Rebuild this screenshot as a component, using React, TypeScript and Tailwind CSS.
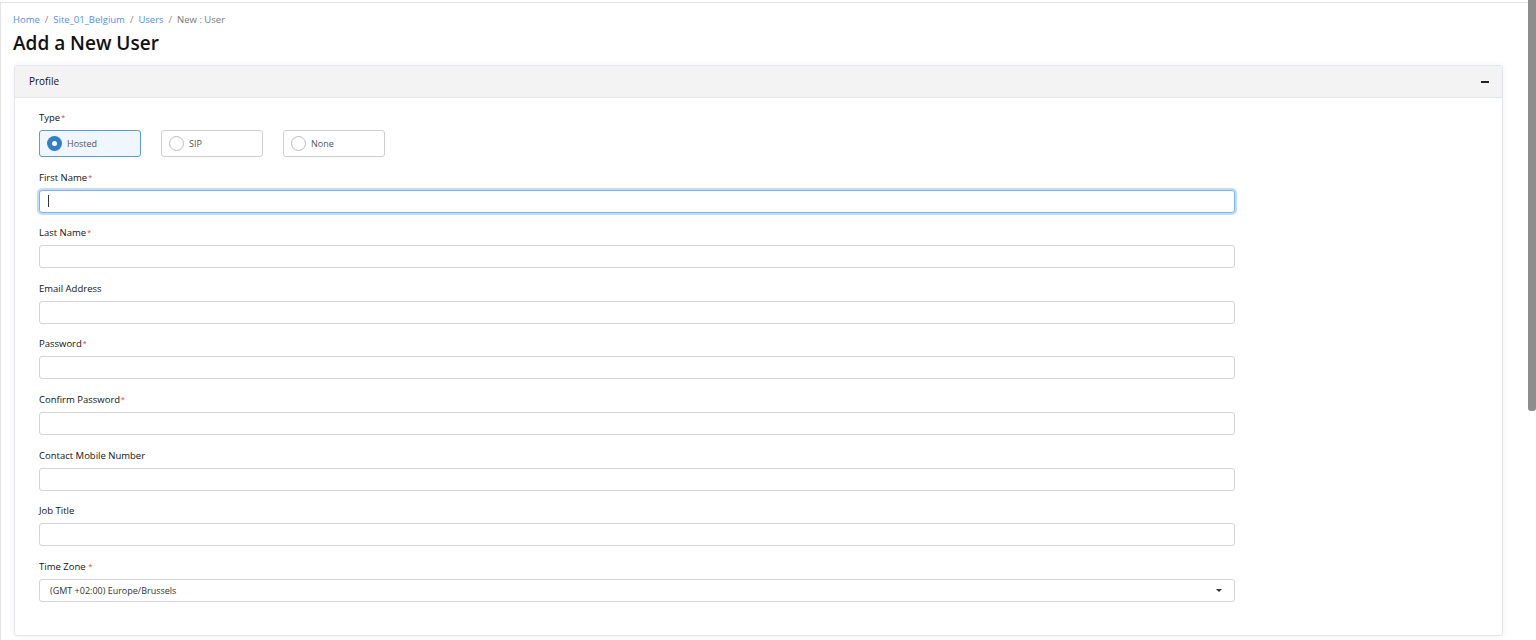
import React from 'react';

const font = { fontFamily: '"Open Sans", "Liberation Sans", sans-serif' };

type Field = { label: string; required?: boolean; focused?: boolean };

const fields: Field[] = [
  { label: 'First Name', required: true, focused: true },
  { label: 'Last Name', required: true },
  { label: 'Email Address' },
  { label: 'Password', required: true },
  { label: 'Confirm Password', required: true },
  { label: 'Contact Mobile Number' },
  { label: 'Job Title' },
];

const Label: React.FC<{ text: string; required?: boolean; spaced?: boolean }> = ({ text, required, spaced }) => (
  <div className="h-[11px] leading-[12px] text-[9.5px] font-medium text-[#111]">
    {text}
    {required && (
      <sup className={spaced ? 'text-[#e53935] text-[7px] ml-[3px] relative -top-[1px]' : 'text-[#e53935] text-[7px] ml-[1px] relative -top-[1px]'}>
        *
      </sup>
    )}
  </div>
);

const TypeOption: React.FC<{ label: string; checked?: boolean }> = ({ label, checked }) => (
  <div
    className={
      checked
        ? 'w-[102px] h-[27px] rounded-[3px] border border-[#5b9bd8] bg-[#f0f6fd] flex items-center pl-[7px] gap-[5px]'
        : 'w-[102px] h-[27px] rounded-[3px] border border-[#cfcfcf] bg-white flex items-center pl-[7px] gap-[5px]'
    }
  >
    {checked ? (
      <span className="w-[15px] h-[15px] rounded-full bg-[#2f80c8] flex items-center justify-center">
        <span className="w-[5px] h-[5px] rounded-full bg-white" />
      </span>
    ) : (
      <span className="w-[15px] h-[15px] rounded-full border border-[#bdbdbd] bg-white" />
    )}
    <span className="text-[9px] text-[#555]">{label}</span>
  </div>
);

const TextField: React.FC<{ field: Field }> = ({ field }) => (
  <div className="flex flex-col gap-[7px]">
    <Label text={field.label} required={field.required} />
    <div className="relative w-[1196px]">
      <input
        type="text"
        className={
          field.focused
            ? 'block w-full h-[23px] rounded-[3px] border border-[#7fb3f0] shadow-[0_0_0_2px_#c3dcfb] outline-none bg-white'
            : 'block w-full h-[23px] rounded-[3px] border border-[#d2d5d9] outline-none bg-white'
        }
      />
      {field.focused && <span className="absolute left-[9px] top-[5px] w-px h-[12px] bg-[#333]" />}
    </div>
  </div>
);

export default function App() {
  return (
    <div className="w-[1536px] h-[640px] overflow-hidden bg-white flex" style={font}>
      <div className="flex-1 mt-[2px] border-t border-l border-[#e3e3e3] pl-[13px] pr-[25px] pt-[11px]">
        <nav className="flex items-center gap-[5px] text-[9.5px] leading-[12px] -ml-px">
          <span className="text-[#4f8ff0]">Home</span>
          <span className="text-[#888]">/</span>
          <span className="text-[#4f8ff0]">Site_01_Belgium</span>
          <span className="text-[#888]">/</span>
          <span className="text-[#4f8ff0]">Users</span>
          <span className="text-[#888]">/</span>
          <span className="text-[#777]">New : User</span>
        </nav>
        <h1 className="text-[19px] leading-[24px] font-semibold text-[#111] mt-[5px] -ml-px">Add a New User</h1>

        <section className="mt-[10px] border border-[#e3e6ea] rounded-[3px] shadow-[0_0_6px_rgba(0,0,0,0.06)] bg-white">
          <div className="h-[32px] bg-[#f3f3f3] border-b border-[#e2e6ea] flex items-center justify-between pl-[14px] pr-[13px]">
            <span className="text-[10px] font-medium text-[#111]">Profile</span>
            <span className="w-[8px] h-[2px] bg-[#222]" />
          </div>

          <div className="pl-[24px] pt-[14px] pb-[33px] flex flex-col gap-[14.6px]">
            <div className="flex flex-col gap-[7px]">
              <Label text="Type" required />
              <div className="flex gap-[20px]">
                <TypeOption label="Hosted" checked />
                <TypeOption label="SIP" />
                <TypeOption label="None" />
              </div>
            </div>

            {fields.map((f) => (
              <TextField key={f.label} field={f} />
            ))}

            <div className="flex flex-col gap-[7px]">
              <Label text="Time Zone" required spaced />
              <div className="w-[1196px] h-[23px] rounded-[3px] border border-[#d2d5d9] flex items-center justify-between pl-[10px] pr-[12px]">
                <span className="text-[9px] text-[#333]">(GMT +02:00) Europe/Brussels</span>
                <span className="w-0 h-0 border-l-[3px] border-r-[3px] border-t-[3px] border-l-transparent border-r-transparent border-t-[#333]" />
              </div>
            </div>
          </div>
        </section>
      </div>

      <div className="w-[8px] h-full bg-white">
        <div className="w-[8px] h-[411px] bg-[#8d8d8d] rounded-b-[3px]" />
      </div>
    </div>
  );
}
